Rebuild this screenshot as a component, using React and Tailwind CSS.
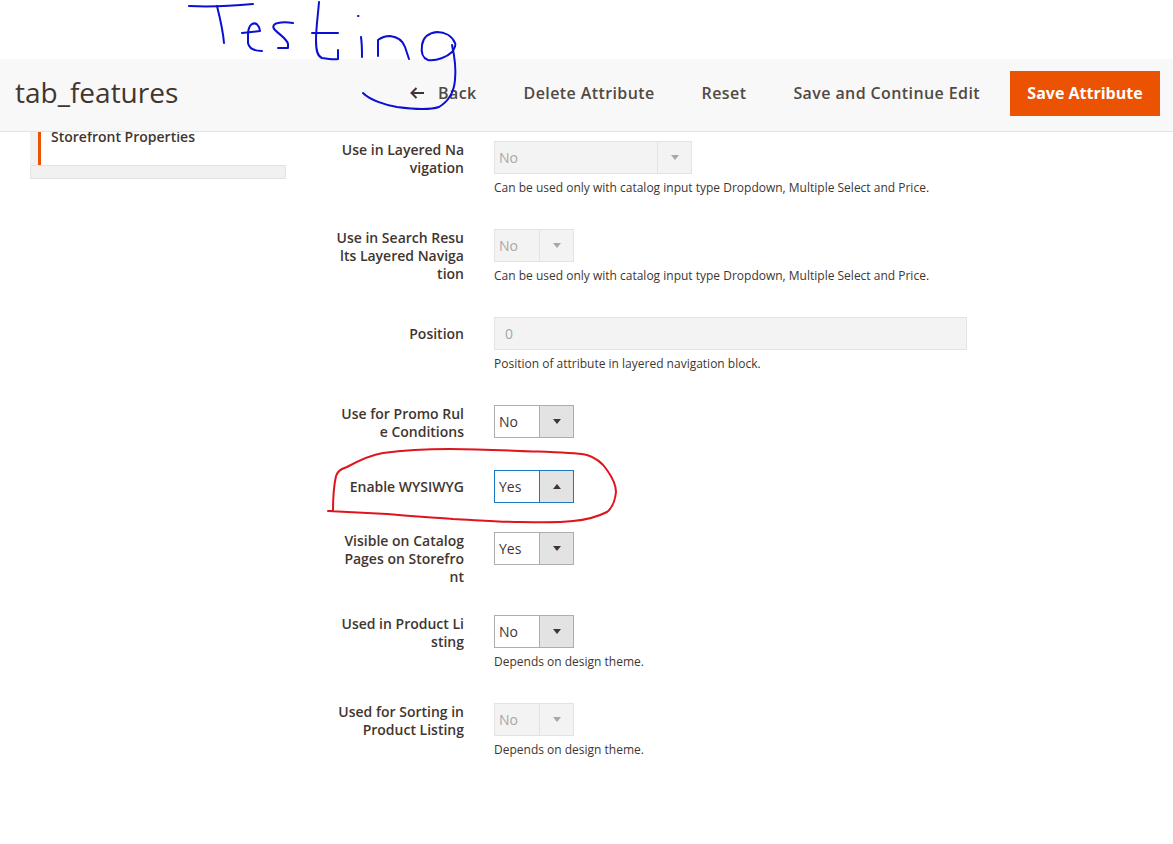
const rows = [
  { label: ["Use in Layered Na", "vigation"], value: "No", disabled: true, wide: true, note: "Can be used only with catalog input type Dropdown, Multiple Select and Price." },
  { label: ["Use in Search Resu", "lts Layered Naviga", "tion"], value: "No", disabled: true, note: "Can be used only with catalog input type Dropdown, Multiple Select and Price." },
  { label: ["Position"], input: "0", note: "Position of attribute in layered navigation block." },
  { label: ["Use for Promo Rul", "e Conditions"], value: "No" },
  { label: ["Enable WYSIWYG"], value: "Yes", open: true },
  { label: ["Visible on Catalog", "Pages on Storefro", "nt"], value: "Yes" },
  { label: ["Used in Product Li", "sting"], value: "No", note: "Depends on design theme." },
  { label: ["Used for Sorting in", "Product Listing"], value: "No", disabled: true, note: "Depends on design theme." },
];

function Select({ value, disabled, wide, open }) {
  const box = disabled
    ? "border-[#e3e3e3] bg-[#f3f3f3] text-[#a8a8a8]"
    : open
      ? "border-[#1979c3] bg-white text-[#41362f]"
      : "border-[#adadad] bg-white text-[#41362f]";
  const divider = disabled
    ? "border-[#e3e3e3] bg-[#f3f3f3]"
    : open
      ? "border-[#1979c3] bg-[#e3e3e3]"
      : "border-[#adadad] bg-[#e3e3e3]";

  return (
    <div className={`flex h-[33px] border ${wide ? "w-[198px]" : "w-[80px]"} ${box}`}>
      <span className="flex-1 pl-[4px] text-sm leading-[31px]">{value}</span>
      <span className={`flex w-[34px] items-center justify-center border-l ${divider}`}>
        <svg width="8" height="5" viewBox="0 0 8 5" className={disabled ? "fill-[#a8a8a8]" : "fill-[#41362f]"}>
          <path d={open ? "M0 5 L4 0 L8 5 Z" : "M0 0 L8 0 L4 5 Z"} />
        </svg>
      </span>
    </div>
  );
}

function Row({ label, value, disabled, wide, open, input, note }) {
  return (
    <div className="mb-[29px] flex">
      <div className="flex min-h-[33px] w-[132px] items-center justify-end self-start">
        <label className="whitespace-nowrap text-right text-sm font-semibold leading-[18px] text-[#41362f]">
          {label.map((line) => (
            <span key={line} className="block">{line}</span>
          ))}
        </label>
      </div>
      <div className="ml-[30px]">
        {input ? (
          <div className="h-[33px] w-[473px] border border-[#e3e3e3] bg-[#f3f3f3] pl-[10px] text-sm leading-[31px] text-[#a8a8a8]">
            {input}
          </div>
        ) : (
          <Select value={value} disabled={disabled} wide={wide} open={open} />
        )}
        {note && <p className="mb-[1px] mt-[3px] text-xs leading-[22px] text-[#41362f]">{note}</p>}
      </div>
    </div>
  );
}

function Handwriting() {
  return (
    <svg className="pointer-events-none absolute left-0 top-0 z-20" width="1173" height="844" viewBox="0 0 1173 844" fill="none" strokeLinecap="round" strokeLinejoin="round">
      <g stroke="#0a0fd2" strokeWidth="2">
        <path d="M189 6 C210 7 232 6 253 4" />
        <path d="M217 6 C220 18 223 30 224 43" />
        <path d="M242 33 L260 31 C259 25 256 22 252 24 C249 26 248 30 248 35 L248 43 C249 48 254 51 262 51" />
        <path d="M293 23 C287 22 282 22 278 23 C273 24 272 27 275 30 C280 35 287 39 288 44 L288 48 L278 48" />
        <path d="M319 2 C318 15 316 28 316 40 C316 50 317 56 322 58 C328 59 334 60 338 59 L338 50" />
        <path d="M312 33 L338 33" />
        <path d="M361 37 C362 44 362 50 362 57" />
        <path d="M358 16 L358.5 16" />
        <path d="M378 56 L378 40 C382 37 386 36 390 36 C398 37 403 41 405 47 L409 59" />
        <path d="M455 43 C452 36 445 32 437 32 C428 33 423 38 422 45 C421 52 422 58 428 60 C437 61 447 57 452 52 C455 48 456 44 455 43" />
        <path d="M452 45 C455 58 456 70 455 80 C454 92 449 101 439 107 C430 110 412 109 397 107 C385 105 370 100 363 93" />
      </g>
      <path
        d="M328 511 L333 511 C333 498 334 485 336 476 C338 470 342 469 347 467 C358 461 370 455 383 453 C405 450 428 449 450 449 C475 449 498 450 520 451 C545 452 570 452 587 455 C597 458 603 464 607 470 C612 477 616 485 616 492 C615 502 612 508 607 512 C597 517 586 520 573 521 C555 523 538 522 520 522 C498 522 475 520 453 519 C430 517 408 516 387 514 C367 513 347 512 328 511"
        stroke="#e0141c"
        strokeWidth="2"
      />
    </svg>
  );
}

export default function App() {
  return (
    <div className="relative h-[844px] overflow-hidden bg-white font-['Open_Sans',sans-serif]">
      <div className="h-[59px]" />
      <header className="relative z-10 flex h-[73px] items-center border-b border-[#e3e3e3] bg-[#f8f8f8] pb-[3px] pl-[15px] pr-[13px]">
        <h1 className="mb-[3px] text-[28px] leading-none text-[#41362f]">tab_features</h1>
        <nav className="ml-auto flex items-center gap-[47px] text-base font-semibold tracking-[0.4px] text-[#514943]">
          <button className="flex items-center gap-[14px] pb-[2px]">
            <svg width="14" height="12" viewBox="0 0 14 12" fill="none" stroke="#41362f" strokeWidth="2">
              <path d="M14 6H1.5 M6.5 1L1.5 6L6.5 11" />
            </svg>
            Back
          </button>
          <button className="pb-[2px]">Delete Attribute</button>
          <button className="pb-[2px]">Reset</button>
          <button className="pb-[2px]">Save and Continue Edit</button>
          <button className="-ml-[17px] h-[45px] w-[150px] bg-[#eb5202] pb-[2px] font-bold tracking-normal text-white">Save Attribute</button>
        </nav>
      </header>
      <main className="flex pl-[30px]">
        <aside className="-mt-[4px] w-[256px]">
          <div className="h-[37px] bg-[#f1f1f1] pl-[8px]">
            <div className="h-full border-l-[3px] border-[#eb5202] bg-white pl-[10px] text-sm font-semibold leading-[18px] text-[#41362f]">
              Storefront Properties
            </div>
          </div>
          <div className="h-[14px] border border-[#e3e3e3] bg-[#f1f1f1]" />
        </aside>
        <form className="ml-[46px] pt-[9px]">
          {rows.map((row) => (
            <Row key={row.label[0]} {...row} />
          ))}
        </form>
      </main>
      <Handwriting />
    </div>
  );
}
